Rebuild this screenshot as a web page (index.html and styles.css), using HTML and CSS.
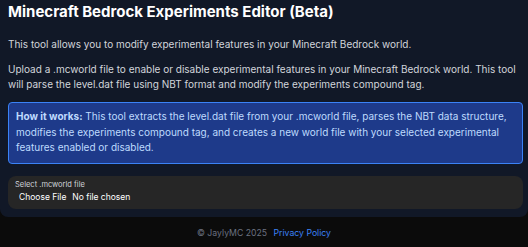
FILE: index.html
```html
<!DOCTYPE html>
<html>
<head>
<meta charset="utf-8">
<link rel="stylesheet" href="styles.css">
</head>
<body>
<main class="card">
  <h1 class="title">Minecraft Bedrock Experiments Editor (Beta)</h1>
  <p class="text">This tool allows you to modify experimental features in your Minecraft Bedrock world.</p>
  <p class="text">Upload a .mcworld file to enable or disable experimental features in your Minecraft Bedrock world. This tool will parse the level.dat file using NBT format and modify the experiments compound tag.</p>
  <div class="info"><strong>How it works:</strong> This tool extracts the level.dat file from your .mcworld file, parses the NBT data structure, modifies the experiments compound tag, and creates a new world file with your selected experimental features enabled or disabled.</div>
  <div class="upload">
    <label class="upload-label" for="file">Select .mcworld file</label>
    <div class="file-row"><span class="file-btn">Choose File</span><span class="file-name">No file chosen</span></div>
  </div>
</main>
<footer class="footer">© JaylyMC 2025 <a class="footer-link" href="#">Privacy Policy</a></footer>
</body>
</html>
```
FILE: styles.css
```css
html, body {
  margin: 0;
  padding: 0;
  background: #0b0b0b;
  font-family: Inter, "Noto Sans", sans-serif;
}
.card {
  background: #111827;
  padding: 1px 5px 8px 8px;
  border-radius: 0 0 8px 8px;
}
.title {
  margin: 0;
  font-size: 15px;
  line-height: 22px;
  font-weight: 700;
  color: #ffffff;
}
.text {
  margin: 14px 0 0;
  font-size: 10px;
  line-height: 15px;
  color: #d1d5db;
}
.text + .text {
  margin-top: 10px;
}
.info {
  margin-top: 10px;
  background: #1e3a8a;
  border: 1px solid #3b82f6;
  border-radius: 4px;
  padding: 6px 7px 7px;
  font-size: 10px;
  line-height: 15.5px;
  color: #bfdbfe;
}
.info strong {
  font-weight: 700;
}
.upload {
  margin-top: 12px;
  background: #262626;
  border-radius: 8px;
  padding: 4px 7px 5px;
}
.upload-label {
  display: block;
  font-size: 7.5px;
  line-height: 10px;
  color: #d1d5db;
}
.file-row {
  display: flex;
  align-items: center;
  gap: 6px;
  font-size: 8.5px;
  line-height: 14px;
  color: #ffffff;
  padding-left: 4px;
}
.footer {
  text-align: center;
  padding-top: 8px;
  font-size: 8.7px;
  line-height: 16px;
  color: #6b7280;
}
.footer-link {
  color: #3b82f6;
  text-decoration: none;
  margin-left: 4px;
}
```
